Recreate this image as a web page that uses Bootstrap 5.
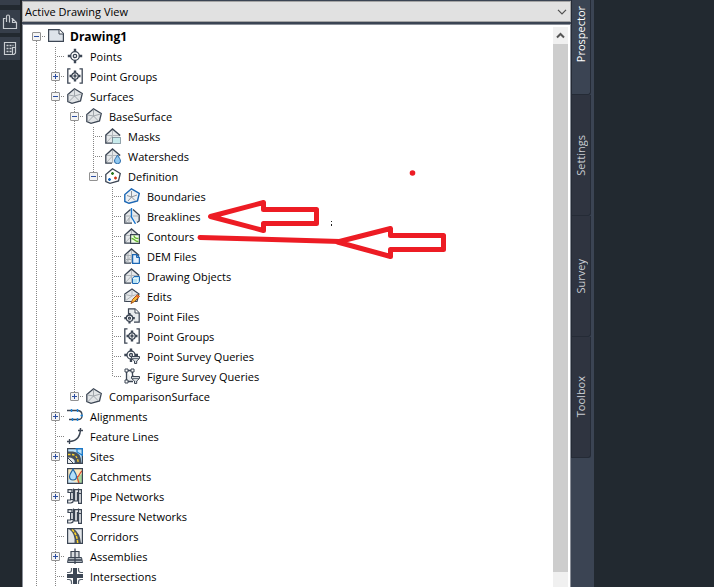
<!DOCTYPE html>
<html lang="en">
<head>
<meta charset="utf-8">
<meta name="viewport" content="width=device-width, initial-scale=1">
<title>Toolspace</title>
<link href="https://cdn.jsdelivr.net/npm/bootstrap@5.3.0/dist/css/bootstrap.min.css" rel="stylesheet">
<style>
body { background: #222930; color: #000; font: 12px/20px "Open Sans", "Noto Sans", sans-serif; }
.tool-strip { width: 20px; gap: 4px; }
.tool-btn { width: 20px; height: 23px; background: #363e4a; border: 0; padding: 0; }
.strip-cap { height: 5px; background: #363e4a; margin-bottom: 1px; }
.palette { background: #3b4453; padding-top: 1px; flex: 0 1 574px; }
.panel-main { gap: 2px; min-width: 0; }
.view-select { height: 21px; padding: 0 20px 0 2px; border: 1px solid #a5a5a5; border-radius: 0; background: #e1e1e1 url("data:image/svg+xml,%3Csvg xmlns='http://www.w3.org/2000/svg' width='10' height='6'%3E%3Cpath d='M1 .8 5 4.8 9 .8' fill='none' stroke='%23505050' stroke-width='1.2'/%3E%3C/svg%3E") no-repeat right 3px center; color: #000; appearance: none; font-size: 11px; line-height: 18px; }
.tree-pane { background: #fff; border: 1px solid #8a8f98; border-bottom: 0; }
.tree { padding: 2px 0 0 4px; }
.tree ul { padding-left: 19px; }
.tree li { background: repeating-linear-gradient(#858585 0 1px, #fff 1px 2px) 9px 0 / 1px 100% no-repeat; }
.tree ul > li:last-child { background-size: 1px 10px; }
.tree .goes-on > li:last-child { background-size: 1px 100%; }
.tree .top-node { background-position: 9px 10px; }
.node { height: 20px; font-size: 11px; white-space: nowrap; }
.joint { width: 19px; height: 19px; padding-left: 5px; flex: none; background: repeating-linear-gradient(90deg, #858585 0 1px, #fff 1px 2px) 11px 9px / 8px 1px no-repeat; }
.toggle { width: 9px; height: 9px; padding: 0; border: 1px solid #919191; border-radius: 1px; background: linear-gradient(#2b4ea0, #2b4ea0) center / 5px 1px no-repeat, #f4f4f4; }
.toggle.collapsed { background: linear-gradient(#2b4ea0, #2b4ea0) center / 5px 1px no-repeat, linear-gradient(#2b4ea0, #2b4ea0) center / 1px 5px no-repeat, #f4f4f4; }
.glyph { width: 16px; height: 16px; margin: 1px 7px 0 2px; flex: none; }
.glyph.root-glyph { margin-right: 6px; }
.root-label { font-size: 12px; }
.scroller { width: 17px; padding: 2px 2px 0 0; }
.scroll-btn { height: 17px; background: #f0f0f0; border: 0; padding: 0; }
.scroll-thumb { background: #cdcdcd; }
.scroll-end { height: 15px; background: #f0f0f0; }
.side-tabs { width: 23px; padding-right: 3px; }
.side-tabs .first-tab { margin-top: -27px; background: #3b4453; color: #fff; }
.side-tab { height: 121px; padding: 0; border: solid #252b36; border-width: 0 1px 1px 1px; background: #2f3440; color: #c9ccd2; border-radius: 0 0 3px 0; font-size: 11px; }
.side-tab span { writing-mode: vertical-rl; transform: rotate(180deg); line-height: 18px; }
.markup { position: absolute; left: 0; top: 0; pointer-events: none; }
</style>
<script src="https://cdn.jsdelivr.net/npm/bootstrap@5.3.0/dist/js/bootstrap.bundle.min.js"></script>
</head>
<body class="vh-100 overflow-hidden">
<svg class="d-none" aria-hidden="true">
  <symbol id="page" viewBox="0 0 16 16"><path d="M.6 1.600H11.500L15.400 5.500V13.400H.6Z" fill="#dde3ea" stroke="#3c4654" stroke-width="1.200"/><path d="M11 1.600V6H15.400" fill="#fff" stroke="#3c4654"/></symbol>
  <symbol id="point" viewBox="0 0 16 16"><g fill="#fff" stroke="#3c4654" stroke-width="1.300"><path d="M8 .8V4M8 12V15.200M.8 8H4M12 8H15.200" stroke-width="2.400"/><circle cx="8" cy="8" r="4.300"/><circle cx="8" cy="8" r="1.700"/></g></symbol>
  <symbol id="group" viewBox="0 0 16 16"><path d="M3.500 .8H.8V15.200H3.500M12.500 .8H15.200V15.200H12.500" fill="none" stroke="#3c4654" stroke-width="1.300"/><g fill="#fff" stroke="#3c4654" stroke-width="1.300"><path d="M8 2.500V5M8 11V13.500M2.500 8H5M11 8H13.500" stroke-width="2.400"/><circle cx="8" cy="8" r="3.200"/><circle cx="8" cy="8" r="1"/></g></symbol>
  <symbol id="surface" viewBox="0 0 16 16"><path d="M7.500 .8 15.300 5.500 13.500 13 5 15.300 .8 13.500V6.500Z" fill="#e1e4e6" stroke="#3c4654" stroke-width="1.300"/><path d="M7.500 1.500V8L1.500 7M7.500 8 14.500 6M7.500 8 12.500 13M7.500 8 2 13.500" fill="none" stroke="#a1a7ac"/></symbol>
  <symbol id="half" viewBox="0 0 16 16"><path d="M.8 7.500 7.500 1 15 7V15.200H.8Z" fill="#e5e8ea"/><path d="M7.500 1V15M1 7.500H15M7.500 8 1 15" fill="none" stroke="#b2b7bb"/><path d="M15.200 7.500 7.500 .9 .8 7V15.200H7" fill="none" stroke="#3c4654" stroke-width="1.300"/></symbol>
  <symbol id="mask" viewBox="0 0 16 16"><use href="#half"/><path d="M7.500 9.500H15.500V15.500H7.500Z" fill="#c8ebec" stroke="#3c5060" stroke-dasharray="1 1"/></symbol>
  <symbol id="water" viewBox="0 0 16 16"><use href="#half"/><path d="M12.500 7C11 10 9.500 11 9.500 13A3 2.700 0 0 0 15.500 13C15.500 11 14 10 12.500 7Z" fill="#8fc8f0" stroke="#2c6cab"/></symbol>
  <symbol id="define" viewBox="0 0 16 16"><path d="M7.500 .8 15.300 5.500 13.500 13 5 15.300 .8 13.500V6.500Z" fill="#fff" stroke="#3c4654" stroke-width="1.300"/><path d="M7.500 4V7M6 5.500H9" stroke="#2b7a1f" stroke-width="1.300"/><path d="M4.500 10V13M3 11.500H6" stroke="#1668c2" stroke-width="1.300"/><path d="M10.500 8.500V11.500M9 10H12" stroke="#cf3b19" stroke-width="1.300"/></symbol>
  <symbol id="bound" viewBox="0 0 16 16"><path d="M7.500 .8 15.300 5.500 13.500 13 5 15.300 .8 13.500V6.500Z" fill="#edf0f3" stroke="#1c67b4" stroke-width="1.400"/><path d="M7.500 3V9L3 7.500M7.500 9 13 7M7.500 9 11 12.500M7.500 9 4 13" fill="none" stroke="#8e949c"/></symbol>
  <symbol id="breakline" viewBox="0 0 16 16"><path d="M6.500 1.500 .8 6.500V15.200H8V1.500Z" fill="#e5e8ea"/><path d="M9 1.500 15.200 7V13L12 14.500 8.500 9Z" fill="#e5e8ea"/><path d="M6.500 1.500 .8 6.500V15.200H8M9 1.500 15.200 7V13L13 14.500" fill="none" stroke="#3c4654" stroke-width="1.300"/><path d="M7 8 1.500 14.500M1.500 8H7M9 8H14.500M5 10V15" stroke="#a7adb2"/><path d="M7.500 0V9L11.500 15.800" fill="none" stroke="#1774cd" stroke-width="1.400"/></symbol>
  <symbol id="contour" viewBox="0 0 16 16"><use href="#half"/><path d="M6.600 6.600H15.400V15.400H6.600Z" fill="#f0ffe5" stroke="#3c4654" stroke-width="1.200"/><path d="M7.500 10.500C10 10 11 14 14.500 13.500M10 7.500C10 10 12 10.500 14.500 10.500" fill="none" stroke="#64b52e" stroke-width="1.400"/></symbol>
  <symbol id="dem" viewBox="0 0 16 16"><use href="#half"/><path d="M4 5V15M1 11.500H8" stroke="#a7adb2"/><path d="M8.600 6.600H12.500L15.400 9.500V15.400H8.600Z" fill="#e3f0fd" stroke="#1c67b4" stroke-width="1.300"/><path d="M12.500 7V9.500H15" fill="none" stroke="#1c67b4"/></symbol>
  <symbol id="objects" viewBox="0 0 16 16"><use href="#half"/><path d="M8.500 10.500 10 8.500H15.500V13.500L14 15.500H8.500Z" fill="#b8e4f4" stroke="#1c67b4"/><path d="M9 10.500H13.500V15" fill="none" stroke="#e4f5fc"/></symbol>
  <symbol id="edit" viewBox="0 0 16 16"><path d="M.8 6 8 .9 15 6 13 13.500H.8Z" fill="#e5e8ea" stroke="#3c4654" stroke-width="1.200"/><path d="M8 2V8L1 13M8 8 1 6.500M8 8 14 6" fill="none" stroke="#b2b7bb"/><path d="M7 15.500 8.500 11.500 13.500 6.500 15.500 8.500 10.500 13.500Z" fill="#f8b83a" stroke="#a35216"/><path d="M12.500 7.500 14.500 9.500" stroke="#e2512c" stroke-width="1.500"/></symbol>
  <symbol id="pfile" viewBox="0 0 16 16"><path d="M4.500 6V.8H11L15.200 5V14.200H10" fill="#e8ebed" stroke="#3c4654" stroke-width="1.200"/><path d="M11 1V5H15" fill="#fff" stroke="#3c4654"/><g fill="#fff" stroke="#3c4654" stroke-width="1.300"><path d="M5.500 5V7.500M5.500 12.500V15.500M.3 10.200H3M8 10.200H10.800" stroke-width="2.200"/><circle cx="5.500" cy="10.200" r="3.200"/><circle cx="5.500" cy="10.200" r="1"/></g></symbol>
  <symbol id="funnel" viewBox="0 0 16 16"><path d="M7.500 8.500H15.500V10.500L12.700 13V15.500H10.500V13L7.500 10.500Z" fill="#d6dade" stroke="#3c4654"/><path d="M8 10.500H15" stroke="#68727d"/></symbol>
  <symbol id="pquery" viewBox="0 0 16 16"><g fill="#fff" stroke="#3c4654" stroke-width="1.300"><path d="M7 .5V3M7 11V14M.3 7H3M11 7H14" stroke-width="2.400"/><circle cx="7" cy="7" r="4"/><circle cx="7" cy="7" r="1.500"/></g><use href="#funnel"/></symbol>
  <symbol id="fquery" viewBox="0 0 16 16"><path d="M2.500 2.500H8.500V8L12 9M2.500 2.500V13.500H9" fill="#e8ebed" stroke="#3c4654" stroke-width="1.300"/><path d="M1 1H4V4H1ZM7 1H10V4H7ZM1 12H4V15H1Z" fill="#fff" stroke="#3c4654"/><use href="#funnel"/></symbol>
  <symbol id="align" viewBox="0 0 16 16"><path d="M0 2.500H4M5 2.500H10M11 2.500Q15 3 15 7M15 8Q15 11.500 11 11.500M10 11.500H6M5 11.500H2" fill="none" stroke="#3c4654" stroke-width="1.300"/><path d="M4.500 1V4M10.500 1V4M5.500 10V13M10.500 10V13M13.500 7.500H16.500" stroke="#1c86dc" stroke-width="1.400"/></symbol>
  <symbol id="feature" viewBox="0 0 16 16"><path d="M0 13.500H3C9 13 13.500 9 13.500 0" fill="none" stroke="#3c4654" stroke-width="1.500"/><path d="M2.500 11V16M11 2.500H16" stroke="#3c4654" stroke-width="1.300"/></symbol>
  <symbol id="site" viewBox="0 0 16 16"><path d="M.6 .6H15.400V15.400H.6Z" fill="#b9e1fa" stroke="#3c4654" stroke-width="1.200"/><path d="M1 9 7 9V15H1Z" fill="#e9edf0"/><path d="M1 3.500H6Q14 4 14.500 15H8Q8 9.500 1 9.500Z" fill="#47515d"/><path d="M1 6.500H5Q10.500 7 11.300 15" fill="none" stroke="#ffd426" stroke-width="1.300" stroke-dasharray="2.500 1.500"/><path d="M10 1V4L15 7M8.500 .6H15.400V8" fill="none" stroke="#1979ca" stroke-width="1.200"/><path d="M1 10 6 15" stroke="#3c4654"/></symbol>
  <symbol id="catch" viewBox="0 0 16 16"><path d="M.6 .6H15.400V15.400H.6Z" fill="#f9e8be"/><path d="M9 9 15 6V15H11Z" fill="#a9d69b"/><path d="M1 11Q7 14 11 15H1Z" fill="#ceeafb"/><path d="M15 3C12 5 13 8 10 9L12 15" fill="none" stroke="#e34a2c" stroke-width="1.200"/><path d="M.6 .6H15.400V15.400H.6Z" fill="none" stroke="#3c4654" stroke-width="1.200"/><path d="M6 1C4.500 4.500 2.500 6 2.500 8.500A3.500 3.500 0 0 0 9.500 8.500C9.500 6 7.500 4.500 6 1Z" fill="#b3e0fa" stroke="#2367a5" stroke-width="1.200"/></symbol>
  <symbol id="pipe" viewBox="0 0 16 16"><path d="M1 1.600H5V4.500H1ZM3.600 4.500H6.400V12Q6.400 15 3.500 15H.6V12H3.600ZM8 1.600H14.400V15.400H11.600V4.600H10.400V13H7.600V1.600Z" fill="#eceef0" stroke="#3c4654" stroke-width="1.200"/><path d="M6.500 .5V5.500M11.500 .5V5M11 5.500H15M3.500 11.500H6.500" stroke="#3c4654" stroke-width="1.200"/></symbol>
  <symbol id="corridor" viewBox="0 0 16 16"><path d="M.6 .6H15.400V15.400H.6Z" fill="#e3e6e9" stroke="#3c4654" stroke-width="1.200"/><path d="M2 1H7Q13 5 14 15H7.500Q8.500 6 2 1Z" fill="#4a535e"/><path d="M5 1.500Q10 6 10.700 15" fill="none" stroke="#ffd426" stroke-width="1.500" stroke-dasharray="3 1"/></symbol>
  <symbol id="assembly" viewBox="0 0 16 16"><path d="M4 3.500H12V9.500H4Z" fill="#d6dade" stroke="#3c4654" stroke-width="1.200"/><path d="M1.500 9.500H14.500L15.500 14.500H.5Z" fill="#aeb6bd" stroke="#3c4654"/><path d="M1 12H15M8 .5V16" stroke="#3c4654" stroke-width="1.300"/></symbol>
  <symbol id="cross" viewBox="0 0 16 16"><path d="M6 0H10V6H16V10H10V16H6V10H0V6H6Z" fill="#3c4654"/><path d="M4.500 0V2Q4.500 4.500 2 4.500H0M11.500 0V2Q11.500 4.500 14 4.500H16M4.500 16V14Q4.500 11.500 2 11.500H0M11.500 16V14Q11.500 11.500 14 11.500H16" fill="none" stroke="#5a646f" stroke-width="1.200"/></symbol>
</svg>

<div class="d-flex h-100">
  <nav class="tool-strip d-flex flex-column flex-shrink-0" aria-label="Tools">
    <div class="strip-cap"></div>
    <button class="tool-btn d-flex align-items-center justify-content-center" type="button" aria-label="Panorama"><svg width="16" height="16" viewBox="0 0 16 16"><path d="M3.500 4.500H1.500V14.500H14.500V8.500L10.500 4.500H9.500M4.500 8V2.500A1.500 1.500 0 0 1 7.500 2.500V8.500M10.500 4.500V8.500H14.500" fill="none" stroke="#c8ccd1" stroke-width="1.200"/></svg></button>
    <button class="tool-btn d-flex align-items-center justify-content-center" type="button" aria-label="Toolspace layout"><svg width="16" height="16" viewBox="0 0 16 16"><path d="M10.500 13.500H2.500V1.500H13.500V6.500H10.500V13.500H12L13.500 12V6.500" fill="none" stroke="#c8ccd1" stroke-width="1.200"/><path d="M4.500 4.500H11.500M4.500 7.500H9.500M4.500 10.500H9.500" stroke="#c8ccd1" stroke-width="1.500" stroke-dasharray="2 1"/></svg></button>
  </nav>
  <main class="palette d-flex border-start border-2 border-dark">
    <div class="panel-main d-flex flex-column flex-grow-1">
      <select class="view-select w-100 flex-shrink-0" aria-label="View"><option>Active Drawing View</option><option>Master View</option></select>
      <div class="tree-pane d-flex flex-grow-1 overflow-hidden">
        <ul class="tree list-unstyled flex-grow-1 mb-0 overflow-hidden">
          <li class="top-node">
            <div class="node d-flex"><span class="joint d-flex align-items-center"><button class="toggle" type="button" data-bs-toggle="collapse" data-bs-target="#drawing" aria-expanded="true" aria-label="Drawing1"></button></span><svg class="glyph root-glyph"><use href="#page"/></svg><span class="root-label fw-bold">Drawing1</span></div>
            <ul id="drawing" class="goes-on list-unstyled collapse show">
              <li><div class="node d-flex"><span class="joint"></span><svg class="glyph"><use href="#point"/></svg>Points</div></li>
              <li><div class="node d-flex"><span class="joint d-flex align-items-center"><button class="toggle collapsed" type="button" aria-label="Expand Point Groups"></button></span><svg class="glyph"><use href="#group"/></svg>Point Groups</div></li>
              <li>
                <div class="node d-flex"><span class="joint d-flex align-items-center"><button class="toggle" type="button" data-bs-toggle="collapse" data-bs-target="#surfaces" aria-expanded="true" aria-label="Surfaces"></button></span><svg class="glyph"><use href="#surface"/></svg>Surfaces</div>
                <ul id="surfaces" class="list-unstyled collapse show">
                  <li>
                    <div class="node d-flex"><span class="joint d-flex align-items-center"><button class="toggle" type="button" data-bs-toggle="collapse" data-bs-target="#base" aria-expanded="true" aria-label="BaseSurface"></button></span><svg class="glyph"><use href="#surface"/></svg>BaseSurface</div>
                    <ul id="base" class="list-unstyled collapse show">
                      <li><div class="node d-flex"><span class="joint"></span><svg class="glyph"><use href="#mask"/></svg>Masks</div></li>
                      <li><div class="node d-flex"><span class="joint"></span><svg class="glyph"><use href="#water"/></svg>Watersheds</div></li>
                      <li>
                        <div class="node d-flex"><span class="joint d-flex align-items-center"><button class="toggle" type="button" data-bs-toggle="collapse" data-bs-target="#definition" aria-expanded="true" aria-label="Definition"></button></span><svg class="glyph"><use href="#define"/></svg>Definition</div>
                        <ul id="definition" class="list-unstyled collapse show">
                          <li><div class="node d-flex"><span class="joint"></span><svg class="glyph"><use href="#bound"/></svg>Boundaries</div></li>
                          <li><div class="node d-flex"><span class="joint"></span><svg class="glyph"><use href="#breakline"/></svg>Breaklines</div></li>
                          <li><div class="node d-flex"><span class="joint"></span><svg class="glyph"><use href="#contour"/></svg>Contours</div></li>
                          <li><div class="node d-flex"><span class="joint"></span><svg class="glyph"><use href="#dem"/></svg>DEM Files</div></li>
                          <li><div class="node d-flex"><span class="joint"></span><svg class="glyph"><use href="#objects"/></svg>Drawing Objects</div></li>
                          <li><div class="node d-flex"><span class="joint"></span><svg class="glyph"><use href="#edit"/></svg>Edits</div></li>
                          <li><div class="node d-flex"><span class="joint"></span><svg class="glyph"><use href="#pfile"/></svg>Point Files</div></li>
                          <li><div class="node d-flex"><span class="joint"></span><svg class="glyph"><use href="#group"/></svg>Point Groups</div></li>
                          <li><div class="node d-flex"><span class="joint"></span><svg class="glyph"><use href="#pquery"/></svg>Point Survey Queries</div></li>
                          <li><div class="node d-flex"><span class="joint"></span><svg class="glyph"><use href="#fquery"/></svg>Figure Survey Queries</div></li>
                        </ul>
                      </li>
                    </ul>
                  </li>
                  <li><div class="node d-flex"><span class="joint d-flex align-items-center"><button class="toggle collapsed" type="button" aria-label="Expand ComparisonSurface"></button></span><svg class="glyph"><use href="#surface"/></svg>ComparisonSurface</div></li>
                </ul>
              </li>
              <li><div class="node d-flex"><span class="joint d-flex align-items-center"><button class="toggle collapsed" type="button" aria-label="Expand Alignments"></button></span><svg class="glyph"><use href="#align"/></svg>Alignments</div></li>
              <li><div class="node d-flex"><span class="joint"></span><svg class="glyph"><use href="#feature"/></svg>Feature Lines</div></li>
              <li><div class="node d-flex"><span class="joint d-flex align-items-center"><button class="toggle collapsed" type="button" aria-label="Expand Sites"></button></span><svg class="glyph"><use href="#site"/></svg>Sites</div></li>
              <li><div class="node d-flex"><span class="joint"></span><svg class="glyph"><use href="#catch"/></svg>Catchments</div></li>
              <li><div class="node d-flex"><span class="joint d-flex align-items-center"><button class="toggle collapsed" type="button" aria-label="Expand Pipe Networks"></button></span><svg class="glyph"><use href="#pipe"/></svg>Pipe Networks</div></li>
              <li><div class="node d-flex"><span class="joint"></span><svg class="glyph"><use href="#pipe"/></svg>Pressure Networks</div></li>
              <li><div class="node d-flex"><span class="joint"></span><svg class="glyph"><use href="#corridor"/></svg>Corridors</div></li>
              <li><div class="node d-flex"><span class="joint d-flex align-items-center"><button class="toggle collapsed" type="button" aria-label="Expand Assemblies"></button></span><svg class="glyph"><use href="#assembly"/></svg>Assemblies</div></li>
              <li><div class="node d-flex"><span class="joint"></span><svg class="glyph"><use href="#cross"/></svg>Intersections</div></li>
            </ul>
          </li>
        </ul>
        <div class="scroller d-flex flex-column flex-shrink-0">
          <button class="scroll-btn d-flex align-items-center justify-content-center" type="button" aria-label="Scroll up"><svg width="9" height="7" viewBox="0 0 9 7"><path d="M1 5.500 4.500 2 8 5.500" fill="none" stroke="#555" stroke-width="2"/></svg></button>
          <div class="scroll-thumb flex-grow-1"></div>
          <div class="scroll-end"></div>
        </div>
      </div>
    </div>
    <div class="side-tabs d-flex flex-column flex-shrink-0" role="tablist" aria-orientation="vertical">
      <button class="side-tab first-tab d-flex align-items-center justify-content-center flex-shrink-0" type="button" role="tab" aria-selected="true"><span>Prospector</span></button>
      <button class="side-tab d-flex align-items-center justify-content-center flex-shrink-0" type="button" role="tab" aria-selected="false"><span>Settings</span></button>
      <button class="side-tab d-flex align-items-center justify-content-center flex-shrink-0" type="button" role="tab" aria-selected="false"><span>Survey</span></button>
      <button class="side-tab d-flex align-items-center justify-content-center flex-shrink-0" type="button" role="tab" aria-selected="false"><span>Toolbox</span></button>
    </div>
  </main>
</div>

<!-- Hand-drawn red arrows over the tree -->
<svg class="markup" width="460" height="280" viewBox="0 0 460 280" aria-hidden="true">
  <g fill="none" stroke="#ed1c24" stroke-width="5" stroke-linejoin="round" stroke-linecap="round">
    <path d="M210.500 216.500 263.500 202.500V209.500H316.500V223.500H263.500V230.500Z"/>
    <path d="M337.500 242 390.500 228.500V235.500H443.500V249.500H390.500V256.500Z"/>
    <path d="M200 237.500 255 239 340 241.500"/>
  </g>
  <circle cx="412.500" cy="173" r="2.800" fill="#ed1c24"/>
  <path d="M331 221H332V222H331ZM331 224H332V226H331Z" fill="#222"/>
</svg>
</body>
</html>
